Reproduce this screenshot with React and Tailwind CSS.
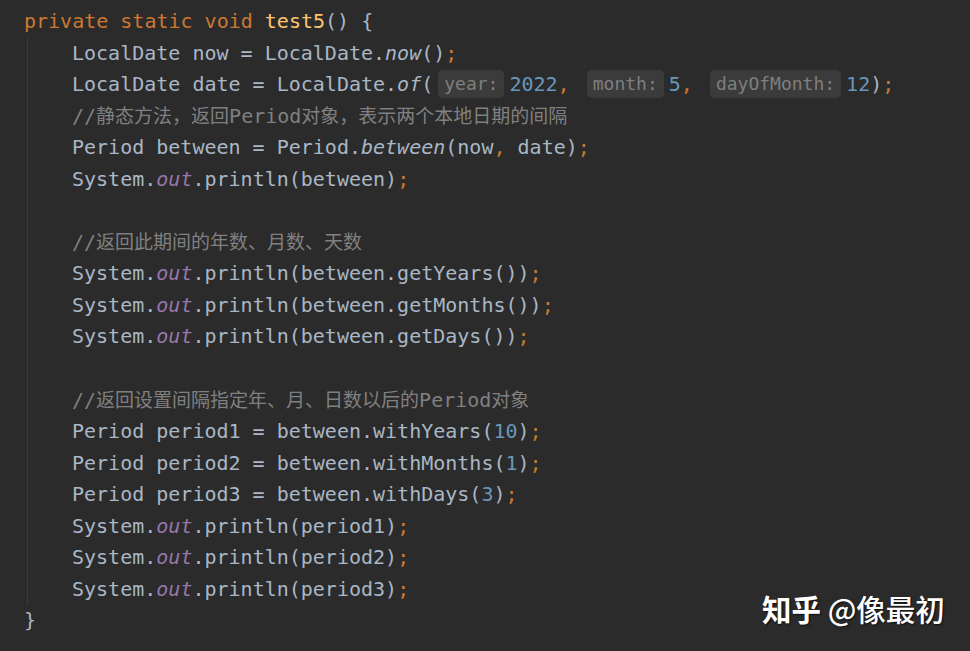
import React from "react";

const K = ({ children }) => <span className="text-[#cc7832]">{children}</span>;
const N = ({ children }) => <span className="text-[#6897bb]">{children}</span>;
const Out = () => <span className="text-[#9876aa] italic">out</span>;
const It = ({ children }) => <span className="italic">{children}</span>;
const C = ({ children }) => <span className="text-[19px]">{children}</span>;
const Hint = ({ children }) => (
  <span className="inline-block ml-[5px] mr-[5px] px-[6px] rounded-[5px] bg-[#3b3b3b] text-[#7f7f7f] text-[18px] leading-[28px] align-[1px]">
    {children}
  </span>
);

const Line = ({ children, className = "" }) => (
  <div className={"h-[31.55px] leading-[31.55px] whitespace-pre " + className}>{children}</div>
);

export default function App() {
  return (
    <div
      className="relative w-[970px] h-[651px] overflow-hidden bg-[#2b2b2b] text-[#a9b7c6] text-[20px] pl-[24px] pt-[6px]"
      style={{ fontFamily: '"DejaVu Sans Mono", "Noto Sans CJK SC", monospace' }}
    >
      <Line>
        <K>private static void </K>
        <span className="text-[#ffc66d]">test5</span>() {"{"}
      </Line>
      <div className="ml-[3px] border-l border-[#3a3a3a] pl-[44px]">
        <Line>
          LocalDate now = LocalDate.<It>now</It>()<K>;</K>
        </Line>
        <Line>
          LocalDate date = LocalDate.<It>of</It>(<Hint>year:</Hint>
          <N>2022</N>
          <K>, </K>
          <Hint>month:</Hint>
          <N>5</N>
          <K>, </K>
          <Hint>dayOfMonth:</Hint>
          <N>12</N>)<K>;</K>
        </Line>
        <Line className="text-[#808080]">
          //<C>静态方法，返回</C>Period<C>对象，表示两个本地日期的间隔</C>
        </Line>
        <Line>
          Period between = Period.<It>between</It>(now<K>, </K>date)<K>;</K>
        </Line>
        <Line>
          System.<Out />.println(between)<K>;</K>
        </Line>
        <Line> </Line>
        <Line className="text-[#808080]">
          //<C>返回此期间的年数、月数、天数</C>
        </Line>
        <Line>
          System.<Out />.println(between.getYears())<K>;</K>
        </Line>
        <Line>
          System.<Out />.println(between.getMonths())<K>;</K>
        </Line>
        <Line>
          System.<Out />.println(between.getDays())<K>;</K>
        </Line>
        <Line> </Line>
        <Line className="text-[#808080]">
          //<C>返回设置间隔指定年、月、日数以后的</C>Period<C>对象</C>
        </Line>
        <Line>
          Period period1 = between.withYears(<N>10</N>)<K>;</K>
        </Line>
        <Line>
          Period period2 = between.withMonths(<N>1</N>)<K>;</K>
        </Line>
        <Line>
          Period period3 = between.withDays(<N>3</N>)<K>;</K>
        </Line>
        <Line>
          System.<Out />.println(period1)<K>;</K>
        </Line>
        <Line>
          System.<Out />.println(period2)<K>;</K>
        </Line>
        <Line>
          System.<Out />.println(period3)<K>;</K>
        </Line>
      </div>
      <Line>{"}"}</Line>
      <div
        className="absolute left-[762px] top-[588px] text-[29.5px] leading-[40px] font-medium text-white whitespace-pre [text-shadow:1px_1px_2px_rgba(0,0,0,0.7)]"
        style={{ fontFamily: '"Noto Sans CJK SC", sans-serif' }}
      >
        <span className="font-bold">知乎</span> @像最初
      </div>
    </div>
  );
}
